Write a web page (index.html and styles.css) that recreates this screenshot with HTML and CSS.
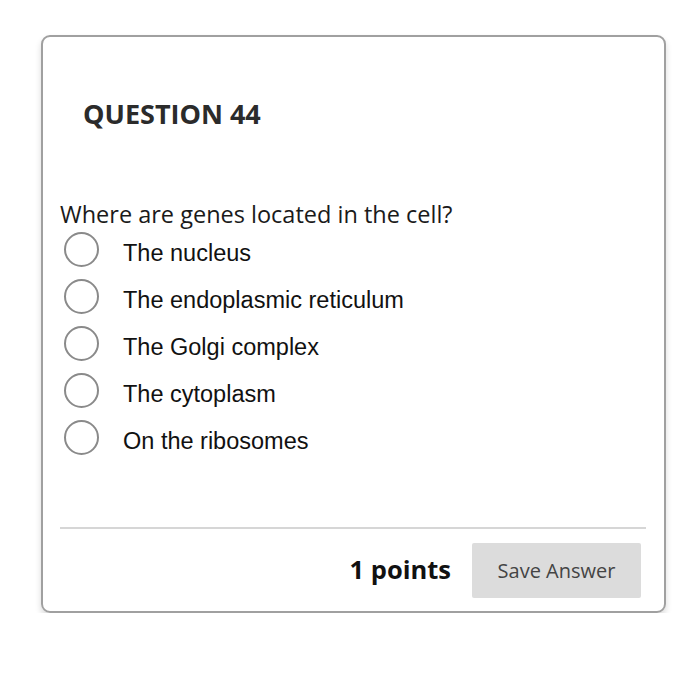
FILE: index.html
```html
<!DOCTYPE html>
<html>
<head>
<meta charset="utf-8">
<link rel="stylesheet" href="styles.css">
</head>
<body>
<div class="card">
  <h2 class="title">QUESTION 44</h2>
  <p class="question">Where are genes located in the cell?</p>
  <ul class="options">
    <li class="option"><span class="radio"></span><span class="label">The nucleus</span></li>
    <li class="option"><span class="radio"></span><span class="label">The endoplasmic reticulum</span></li>
    <li class="option"><span class="radio"></span><span class="label">The Golgi complex</span></li>
    <li class="option"><span class="radio"></span><span class="label">The cytoplasm</span></li>
    <li class="option"><span class="radio"></span><span class="label">On the ribosomes</span></li>
  </ul>
  <div class="footer">
    <span class="points">1 points</span>
    <button class="save">Save Answer</button>
  </div>
</div>
</body>
</html>
```
FILE: styles.css
```css
html, body {
  margin: 0;
  padding: 0;
  background: #fff;
}
body {
  padding: 35px 0 0 41px;
  font-family: "Open Sans", sans-serif;
}
.card {
  box-sizing: border-box;
  width: 625px;
  height: 578px;
  border: 2px solid #a0a0a0;
  border-radius: 9px;
  box-shadow: 0 4px 6px rgba(0, 0, 0, 0.15);
  padding: 0 18px 0 17px;
  display: flex;
  flex-direction: column;
}
.title {
  margin: 59px 0 0 23px;
  font-size: 27px;
  font-weight: 700;
  color: #2b2b2b;
  line-height: 36px;
}
.question {
  margin: 66px 0 0 0;
  font-size: 23.5px;
  color: #1a1a1a;
  line-height: 32px;
}
.options {
  list-style: none;
  margin: 0;
  padding: 0;
}
.option {
  display: flex;
  align-items: center;
  height: 47px;
}
.radio {
  box-sizing: border-box;
  width: 35px;
  height: 35px;
  border: 2.5px solid #8a8a8a;
  border-radius: 50%;
  margin: 0 0 0 4px;
  position: relative;
  top: -4px;
}
.label {
  margin-left: 24px;
  font-family: "Liberation Sans", Arial, sans-serif;
  font-size: 23.5px;
  color: #111;
}
.footer {
  margin-top: auto;
  margin-bottom: 13px;
  border-top: 2px solid #d6d6d6;
  display: flex;
  justify-content: flex-end;
  align-items: center;
  padding-top: 14px;
}
.points {
  font-size: 25.5px;
  font-weight: 700;
  color: #111;
  margin-right: 21px;
  position: relative;
  top: -2px;
}
.save {
  width: 169px;
  height: 55px;
  background: #dcdcdc;
  border: none;
  border-radius: 2px;
  font-family: "Open Sans", sans-serif;
  font-size: 20px;
  color: #444;
  margin-right: 5px;
}
```
